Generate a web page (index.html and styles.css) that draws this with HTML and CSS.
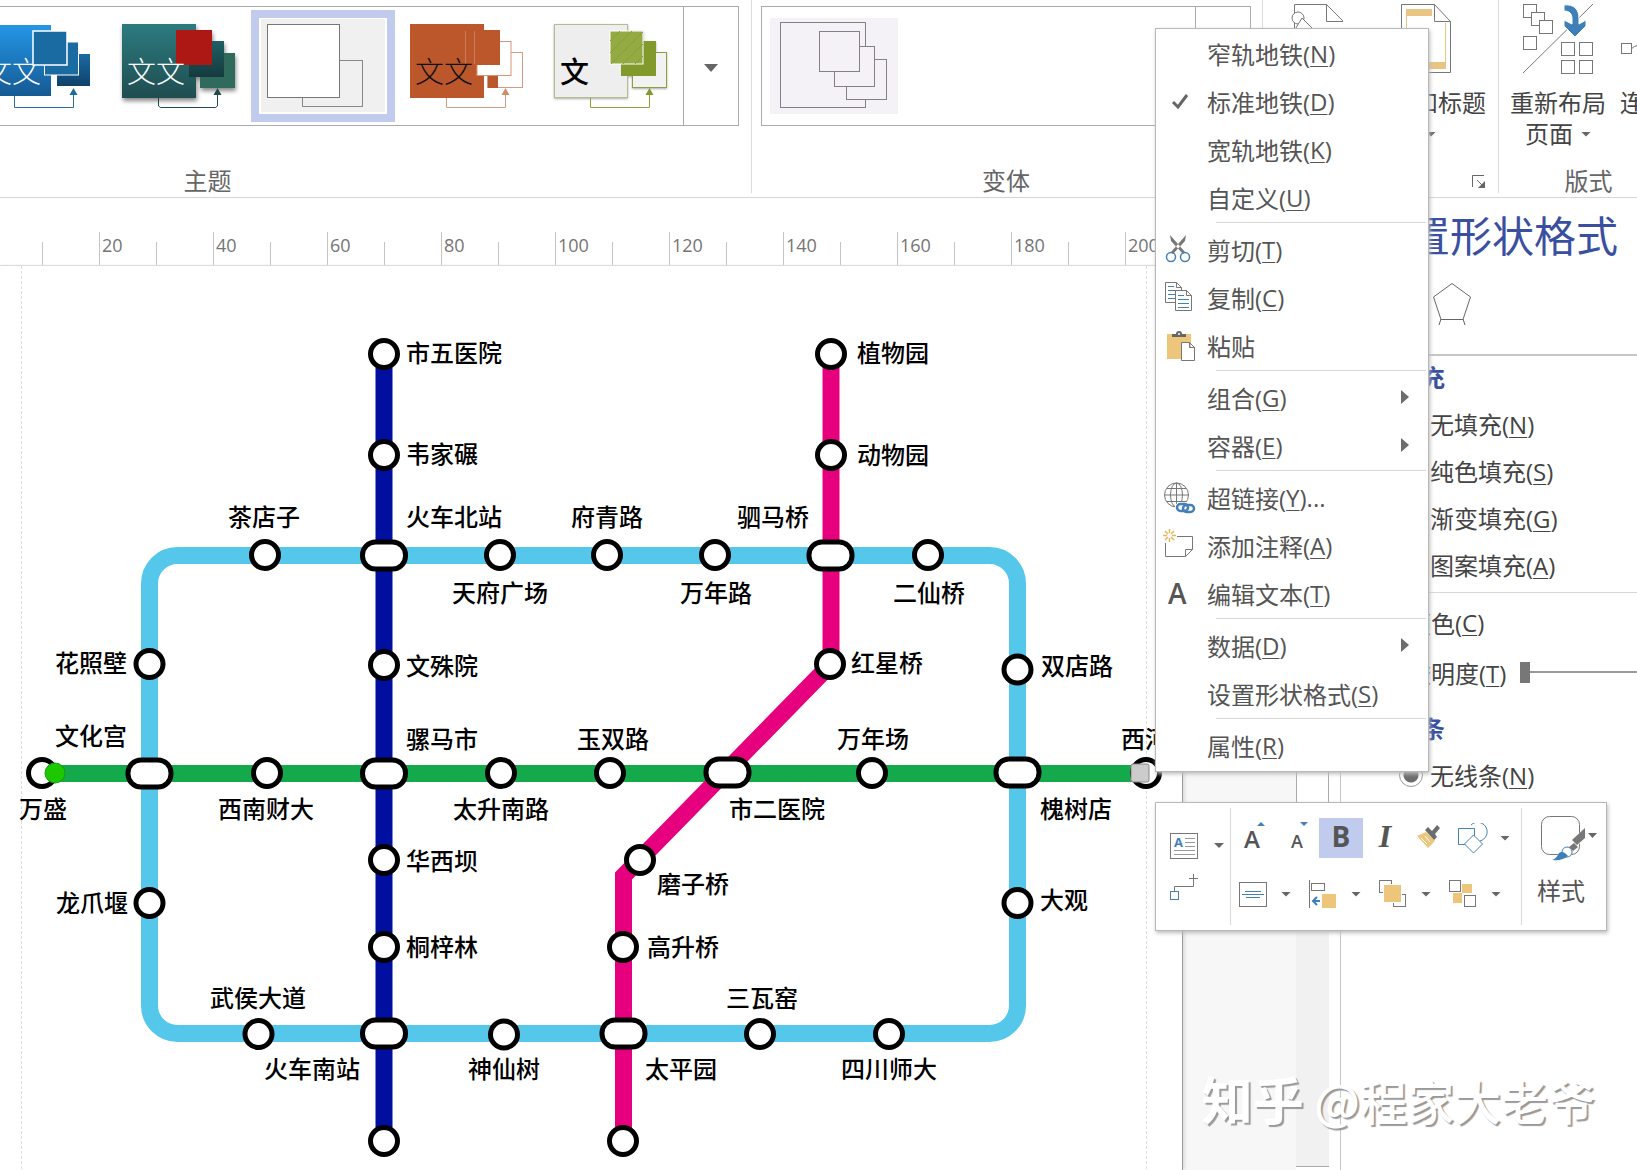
FILE: index.html
```
<!DOCTYPE html>
<html lang="zh-CN">
  <head>
    <meta charset="UTF-8" />
    <meta name="viewport" content="width=device-width, initial-scale=1.0" />
    <title>地铁线路图</title>
    <link rel="stylesheet" href="styles.css">
  </head>
  <body>
    <!-- Ribbon -->
    <header class="ribbon">
      <section class="group group-themes">
        <div class="gallery">
          <div class="gallery-items">
            <button class="theme" aria-label="主题 1">
              <svg width="144" height="118">
                <defs>
                  <linearGradient id="blue" x2="0" y2="1"><stop offset="0" stop-color="#2496e6" /><stop offset="1" stop-color="#155a94" /></linearGradient>
                  <linearGradient id="navy" x2="0" y2="1"><stop offset="0" stop-color="#1b6ba3" /><stop offset="1" stop-color="#0f426b" /></linearGradient>
                </defs>
                <rect x="15" y="18" width="73" height="71" fill="url(#blue)" />
                <text x="20" y="76" class="theme-text" fill="#fff">文文</text>
                <rect x="94" y="47" width="33" height="32" fill="url(#navy)" />
                <rect x="81.500" y="35" width="34" height="33" fill="#1b6ba3" stroke="#fff" />
                <rect x="70" y="24" width="34" height="34" fill="#1b6ba3" stroke="#fff" stroke-width="1.500" />
                <path d="M51.500 89v11.500h59V87" fill="none" stroke="#2a6c9c" />
                <path d="M106.500 88l4-7 4 7z" fill="#1b6ba3" />
              </svg>
            </button>
            <button class="theme" aria-label="主题 2">
              <svg width="144" height="118">
                <defs>
                  <linearGradient id="teal" x2="0" y2="1"><stop offset="0" stop-color="#2c7b80" /><stop offset="1" stop-color="#1f4d50" /></linearGradient>
                  <linearGradient id="deep" x2="0" y2="1"><stop offset="0" stop-color="#1f5f64" /><stop offset="1" stop-color="#153a3e" /></linearGradient>
                </defs>
                <g class="lifted">
                  <rect x="15" y="17" width="74" height="74" fill="url(#teal)" />
                  <rect x="93" y="46" width="35" height="35" fill="#2f6a5d" />
                  <rect x="82" y="34" width="35" height="36" fill="url(#deep)" />
                  <rect x="69" y="23" width="36" height="35" fill="#ad1815" />
                </g>
                <text x="20" y="76" class="theme-text" fill="#fff">文文</text>
                <path d="M51.500 91v8l2 1.500h55l2-1.500V87" fill="none" stroke="#23494c" />
                <path d="M106.500 88l4-7 4 7z" fill="#23494c" />
              </svg>
            </button>
            <button class="theme selected" aria-label="主题 3">
              <svg width="144" height="118">
                <rect x="10" y="12" width="124" height="93" fill="#f0f0f0" />
                <rect x="51.500" y="53.500" width="60" height="46" fill="none" stroke="#888" />
                <rect x="16.500" y="17.500" width="72" height="73" fill="#fff" stroke="#777" />
              </svg>
            </button>
            <button class="theme" aria-label="主题 4">
              <svg width="144" height="118">
                <rect x="15" y="17" width="74" height="74" fill="#bc572c" />
                <rect x="92.500" y="45.500" width="35" height="35" fill="#fff" stroke="#d39c85" />
                <rect x="93" y="68" width="10" height="13" fill="#bc572c" />
                <rect x="82" y="34.500" width="34" height="34" fill="#fff" stroke="#d8957a" />
                <rect x="65" y="23" width="40" height="35" fill="#bc572c" />
                <path d="M70.500 24v33M79.500 24v33" stroke="#cc7a58" />
                <text x="20" y="76" class="theme-text" fill="#111">文文</text>
                <path d="M51.500 91v9.500h59V87" fill="none" stroke="#d39c85" />
                <path d="M106.500 88l4-7 4 7z" fill="#d18a70" />
              </svg>
            </button>
            <button class="theme" aria-label="主题 5">
              <svg width="144" height="118">
                <g class="raised">
                  <rect x="15.500" y="17.500" width="73" height="73" fill="#eee" stroke="#b3bd93" />
                  <rect x="93.500" y="45.500" width="34" height="35" fill="#f2f2f2" stroke="#8da03c" />
                  <rect x="82" y="34" width="35" height="35" fill="#82992c" />
                  <rect x="71" y="24" width="33" height="33" fill="#94aa42" stroke="#fff" />
                </g>
                <path d="M71 34l10-10M71 46l22-22M72 57l32-32M84 57l20-20M96 57l8-8" stroke="#87a035" />
                <text x="21" y="76" class="theme-text theme-text-dark">文</text>
                <path d="M51.500 91v9.500h59V87" fill="none" stroke="#8da03c" />
                <path d="M106.500 88l4-7 4 7z" fill="#82992c" />
              </svg>
            </button>
          </div>
          <button class="gallery-more" aria-label="更多主题"><span class="arrow arrow-big"></span></button>
        </div>
        <div class="group-name">主题</div>
      </section>

      <section class="group group-variants">
        <div class="gallery">
          <div class="gallery-items gallery-start">
            <button class="variant" aria-label="变体 1">
              <svg width="128" height="96" fill="#f4f1f7" stroke="#858087">
                <rect width="128" height="96" stroke="none" />
                <rect x="10.500" y="4.500" width="85" height="85" />
                <rect x="76.500" y="41.500" width="40" height="40" />
                <rect x="64.500" y="28.500" width="40" height="40" />
                <rect x="49.500" y="13.500" width="40" height="40" />
              </svg>
            </button>
          </div>
          <button class="gallery-more" aria-label="更多变体"></button>
        </div>
        <div class="group-name">变体</div>
      </section>

      <section class="group group-background">
        <div class="tools">
          <button class="tool tool-background">
            <svg width="52" height="72" fill="#fff" stroke="#777">
              <path d="M3.500 28V.5h32l17 17v54h-49V28M35.500 .5v17h17" />
              <circle cx="7" cy="14" r="6" /><path d="M0 32l11-18 18 18" />
            </svg>
            <span>背景</span>
            <span class="tool-line"><i class="arrow"></i></span>
          </button>
          <button class="tool tool-titles">
            <svg width="52" height="72" fill="#fff" stroke="#777">
              <path d="M1.500 .5h33l16 17v51h-49zM34.500 .5v17h16" />
              <path d="M6 5h26v7H6zM6 58h40v7H6z" fill="#e8c583" stroke="none" />
              <path d="M6.500 11v50M45.500 19v42" stroke="#e8c583" />
            </svg>
            <span>边框和标题</span>
            <span class="tool-line"><i class="arrow"></i></span>
          </button>
        </div>
        <button class="launcher" aria-label="页面设置">
          <svg width="14" height="14" fill="none" stroke="#666"><path d="M.5 12V.5H12M5 5l7 7" /><path d="M13 6v7H6z" fill="#666" stroke="none" /></svg>
        </button>
      </section>

      <section class="group group-layout">
        <div class="tools">
          <button class="tool tool-relayout">
            <svg width="72" height="72" fill="#fff" stroke="#777">
              <path d="M1 69L71 0" />
              <rect x="1.500" y=".5" width="13" height="13" /><rect x="9.500" y="8.500" width="13" height="13" /><rect x="17.500" y="16.500" width="13" height="13" />
              <rect x="1.500" y="32.500" width="13" height="13" />
              <rect x="39.500" y="38.500" width="13" height="13" /><rect x="57.500" y="38.500" width="13" height="13" />
              <rect x="39.500" y="56.500" width="13" height="13" /><rect x="57.500" y="56.500" width="13" height="13" />
              <path d="M42 1c10-1 15 4 15 14v5l7-4v6L53 33 42 22v-6l8 4v-5c0-6-3-8-8-8z" fill="#3f7fb8" stroke="#fff" />
            </svg>
            <span>重新布局</span>
            <span class="tool-line">页面<i class="arrow"></i></span>
          </button>
          <button class="tool tool-connect">
            <svg width="72" height="72" fill="#fff" stroke="#777"><path d="M11 45q6-6 20-4" /><rect x="1.500" y="39.500" width="10" height="10" /></svg>
            <span>连接线</span>
          </button>
        </div>
        <div class="group-name">版式</div>
      </section>
    </header>

    <div class="workspace">
      <!-- Drawing area -->
      <main class="drawing">
        <div class="ruler">
          <div class="mark"><span></span><i></i></div>
          <div class="mark"><span>20</span><i></i></div>
          <div class="mark"><span>40</span><i></i></div>
          <div class="mark"><span>60</span><i></i></div>
          <div class="mark"><span>80</span><i></i></div>
          <div class="mark"><span>100</span><i></i></div>
          <div class="mark"><span>120</span><i></i></div>
          <div class="mark"><span>140</span><i></i></div>
          <div class="mark"><span>160</span><i></i></div>
          <div class="mark"><span>180</span><i></i></div>
          <div class="mark"><span>200</span><i></i></div>
        </div>
        <div class="sheet">
          <svg class="metro" width="1182" height="904" viewBox="0 266 1182 904">
            <path class="margin-line" d="M21.500 266v904M1146.500 266v904" />
            <rect class="line" x="149.500" y="555.500" width="868" height="478" rx="28" stroke="#54c7ea" />
            <path class="line" d="M42 773.500H1146" stroke="#14a94a" />
            <path class="line" d="M384 354V1141" stroke="#000f9f" />
            <path class="line" d="M831 354V664L623.500 876V1141" stroke="#e6007e" />

            <g class="stops">
              <circle cx="384" cy="354" r="13.500" /><circle cx="384" cy="455" r="13.500" /><circle cx="384" cy="665" r="13.500" />
              <circle cx="384" cy="860" r="13.500" /><circle cx="384" cy="947" r="13.500" /><circle cx="384" cy="1141" r="13.500" />
              <circle cx="831" cy="354" r="13.500" /><circle cx="831" cy="455" r="13.500" /><circle cx="830" cy="664" r="13.500" />
              <circle cx="640" cy="860" r="13.500" /><circle cx="623" cy="947" r="13.500" /><circle cx="623" cy="1141" r="13.500" />
              <circle cx="265" cy="555" r="13.500" /><circle cx="500" cy="555" r="13.500" /><circle cx="607" cy="555" r="13.500" />
              <circle cx="715" cy="555" r="13.500" /><circle cx="928" cy="555" r="13.500" />
              <circle cx="149.500" cy="664" r="13.500" /><circle cx="149.500" cy="903" r="13.500" />
              <circle cx="1017.500" cy="669.500" r="13.500" /><circle cx="1017.500" cy="903" r="13.500" />
              <circle cx="42" cy="773" r="13.500" /><circle cx="267" cy="773" r="13.500" /><circle cx="501" cy="773" r="13.500" />
              <circle cx="610" cy="773" r="13.500" /><circle cx="872" cy="773" r="13.500" /><circle cx="1146" cy="773" r="13.500" />
              <circle cx="258.500" cy="1034" r="13.500" /><circle cx="504" cy="1034.500" r="13.500" /><circle cx="760" cy="1034" r="13.500" /><circle cx="889" cy="1034" r="13.500" />
            </g>
            <g class="stops">
              <rect x="362.500" y="542" width="43" height="27" rx="13" /><rect x="809" y="542" width="43" height="27" rx="13" />
              <rect x="128" y="760" width="43" height="27" rx="13" /><rect x="362.500" y="760" width="43" height="27" rx="13" />
              <rect x="706" y="759" width="43" height="27" rx="13" /><rect x="996" y="759" width="43" height="27" rx="13" />
              <rect x="362.500" y="1020" width="43" height="27" rx="13" /><rect x="602" y="1020" width="43" height="27" rx="13" />
            </g>
            <circle cx="55" cy="773" r="10" fill="#1ec800" stroke="#159a10" />
            <rect x="1131" y="764" width="18" height="18" rx="2" fill="#ccc" stroke="#888" />

            <g class="stop-names">
              <text x="406" y="362">市五医院</text>
              <text x="406" y="463">韦家碾</text>
              <text x="228" y="526">茶店子</text>
              <text x="406" y="526">火车北站</text>
              <text x="452" y="602">天府广场</text>
              <text x="571" y="526">府青路</text>
              <text x="680" y="602">万年路</text>
              <text x="737" y="526">驷马桥</text>
              <text x="893" y="602">二仙桥</text>
              <text x="857" y="362">植物园</text>
              <text x="857" y="464">动物园</text>
              <text x="851" y="672">红星桥</text>
              <text x="1041" y="675">双店路</text>
              <text x="55" y="672">花照壁</text>
              <text x="406" y="675">文殊院</text>
              <text x="55" y="745">文化宫</text>
              <text x="406" y="748">骡马市</text>
              <text x="19" y="818">万盛</text>
              <text x="218" y="818">西南财大</text>
              <text x="453" y="818">太升南路</text>
              <text x="577" y="748">玉双路</text>
              <text x="729" y="818">市二医院</text>
              <text x="837" y="748">万年场</text>
              <text x="1040" y="818">槐树店</text>
              <text x="1121" y="748">西河</text>
              <text x="406" y="870">华西坝</text>
              <text x="56" y="912">龙爪堰</text>
              <text x="406" y="956">桐梓林</text>
              <text x="657" y="893">磨子桥</text>
              <text x="647" y="956">高升桥</text>
              <text x="1040" y="909">大观</text>
              <text x="210" y="1007">武侯大道</text>
              <text x="264" y="1078">火车南站</text>
              <text x="468" y="1078">神仙树</text>
              <text x="645" y="1078">太平园</text>
              <text x="726" y="1007">三瓦窑</text>
              <text x="841" y="1078">四川师大</text>
            </g>
          </svg>
        </div>
      </main>
      <div class="scrollbar">
        <div class="scroll-thumb"></div>
        <div class="scroll-end"></div>
      </div>

      <!-- Format pane -->
      <aside class="pane">
        <h1>设置形状格式</h1>
        <div class="pane-tabs">
          <button aria-label="填充与线条">
            <svg width="40" height="44" fill="none" stroke="#666"><path d="M20 .500L38.500 14 31 36.500H9L1.500 14zM9 36l-2 6M31 36l2 6" /></svg>
          </button>
        </div>
        <h2>填充</h2>
        <label class="option"><input type="radio" name="fill" /><span>无填充(<u>N</u>)</span></label>
        <label class="option"><input type="radio" name="fill" /><span>纯色填充(<u>S</u>)</span></label>
        <label class="option"><input type="radio" name="fill" /><span>渐变填充(<u>G</u>)</span></label>
        <label class="option"><input type="radio" name="fill" /><span>图案填充(<u>A</u>)</span></label>
        <div class="pane-part">
          <div class="pane-row">颜色(<u>C</u>)</div>
          <div class="pane-row"><label for="opacity">透明度(<u>T</u>)</label><input type="range" id="opacity" value="0" /></div>
        </div>
        <h2>线条</h2>
        <label class="option"><input type="radio" name="stroke" checked /><span>无线条(<u>N</u>)</span></label>
      </aside>
    </div>

    <!-- Context menu -->
    <div class="menu" role="menu">
      <button><svg></svg>窄轨地铁(<u>N</u>)</button>
      <button><svg><path d="M9 17l5 5 9-12" fill="none" stroke="#666" stroke-width="3" /></svg>标准地铁(<u>D</u>)</button>
      <button><svg></svg>宽轨地铁(<u>K</u>)</button>
      <button><svg></svg>自定义(<u>U</u>)</button>
      <hr />
      <button>
        <svg fill="none"><path d="M6 2l1 6 12 13 2-2zM22 2l-1 6L9 21l-2-2z" fill="#777" /><circle cx="7" cy="24" r="4.500" stroke="#4580b5" stroke-width="1.500" /><circle cx="21" cy="24" r="4.500" stroke="#4580b5" stroke-width="1.500" /></svg>剪切(<u>T</u>)
      </button>
      <button>
        <svg fill="#fff" stroke="#777"><path d="M1.500 1.500h11l5 5v15h-16zM12.500 1.500v5h5" /><path d="M4 5.500h6M4 9.500h10M4 13.500h7M4 17.500h7" stroke="#4580b5" /><path d="M11.500 9.500h11l5 5v15h-16zM22.500 9.500v5h5" /><path d="M14 14.500h6M14 18.500h11M14 22.500h11M14 26.500h11" stroke="#4580b5" /></svg>复制(<u>C</u>)
      </button>
      <button>
        <svg><path d="M3 5h24v25H3z" fill="#edc57b" /><path d="M8 8V5h4a3 3 0 0 1 6 0h4v3z" fill="#666" /><circle cx="15" cy="5" r="1" fill="#fff" /><path d="M17.500 13.500h8l5 5v13h-13zM25.500 13.500v5h5" fill="#fff" stroke="#777" /></svg>粘贴
      </button>
      <hr />
      <button><svg></svg>组合(<u>G</u>)<i class="submenu"></i></button>
      <button><svg></svg>容器(<u>E</u>)<i class="submenu"></i></button>
      <hr />
      <button>
        <svg fill="none" stroke="#777"><circle cx="12.500" cy="14" r="12" /><ellipse cx="12.500" cy="14" rx="6" ry="12" /><path d="M12.500 2v24M1 14h24M3 7.500h19M3 20.500h19" /><path d="M11 32v-8l4-3h17v11z" fill="#fff" stroke="none" /><g stroke="#4580b5" stroke-width="2.500"><rect x="13" y="23" width="11" height="7" rx="3.500" /><rect x="19" y="24" width="11" height="7" rx="3.500" /></g></svg>超链接(<u>Y</u>)...
      </button>
      <button>
        <svg fill="none" stroke="#777"><path d="M13 7.500h15.500v13l-7 7H1.500V14M28.500 20.500h-7v7" /><path d="M5.500 0v4M5.500 9v4M-1 6.500h4M8 6.500h4M1 2l3 3M10 2L7 5M1 11l3-3M10 11L7 8" stroke="#e5b55c" stroke-width="1.500" /></svg>添加注释(<u>A</u>)
      </button>
      <button><svg><text x="4" y="27" class="menu-letter">A</text></svg>编辑文本(<u>T</u>)</button>
      <hr />
      <button><svg></svg>数据(<u>D</u>)<i class="submenu"></i></button>
      <button><svg></svg>设置形状格式(<u>S</u>)</button>
      <hr />
      <button><svg></svg>属性(<u>R</u>)</button>
    </div>

    <!-- Mini toolbar -->
    <div class="mini-toolbar">
      <div class="mini-left">
        <button aria-label="文本框">
          <svg width="28" height="26" fill="none" stroke="#777"><rect x=".5" y=".5" width="27" height="25" /><path d="M15 5.500h10M15 9.500h10M15 13.500h10M4 17.500h21M4 21.500h21" stroke="#999" /><text x="4" y="14" class="box-letter">A</text></svg>
          <i class="arrow"></i>
        </button>
        <button aria-label="连接线">
          <svg width="28" height="26" fill="none" stroke="#777"><path d="M4.500 17v-4.500h19V0M19 4.500h9" /><rect x=".5" y="17.500" width="8" height="8" stroke="#4580b5" /></svg>
        </button>
      </div>
      <div class="mini-main">
        <div class="mini-row">
          <button class="letter" aria-label="增大字号"><svg width="32" height="32"><text x="7" y="28" class="grow-letter">A</text><path d="M20 6l4-4 4 4z" fill="#4580b5" /></svg></button>
          <button class="letter" aria-label="减小字号"><svg width="32" height="32"><text x="10" y="28" class="shrink-letter">A</text><path d="M19 2h8l-4 4z" fill="#4580b5" /></svg></button>
          <button class="letter bold">B</button>
          <button class="letter italic">I</button>
          <button class="letter" aria-label="格式刷">
            <svg width="28" height="28"><path d="M2 14l9-4 9 9-7 7z" fill="#edc57b" /><path d="M6 16l6 6M10 14l5 6" stroke="#fff" /><path d="M10 8l3-3 4 4 5-6 3 3-5 6 2 3-3 3z" fill="#6d6d6d" /></svg>
          </button>
          <button class="shapes" aria-label="更改形状">
            <svg width="30" height="30" fill="none" stroke="#4580b5"><path d="M13 2a9.500 9.500 0 1 1 9 16" /><path d="M.5 5.500h16v16H.5z" fill="#fff" /><path d="M15.500 12l9 9-9 9-9-9z" fill="#fff" /></svg>
            <i class="arrow"></i>
          </button>
        </div>
        <div class="mini-row">
          <button class="split" aria-label="对齐文本"><svg width="28" height="28" fill="none" stroke="#777"><rect x=".5" y="2.500" width="27" height="24" /><path d="M6 11.500h16M3 14.500h22M7 17.500h14" stroke="#4580b5" /></svg><i class="arrow"></i></button>
          <button class="split" aria-label="对齐形状"><svg width="28" height="28" fill="none" stroke="#777"><path d="M.5 0v28" /><rect x="2.500" y="3.500" width="13" height="7" /><rect x="13" y="14" width="14" height="14" fill="#edc57b" stroke="none" /><path d="M4 21h7M8 17l-4 4 4 4" stroke="#3f7fb8" stroke-width="2" /></svg><i class="arrow"></i></button>
          <button class="split" aria-label="置于顶层"><svg width="28" height="28" fill="none" stroke="#777"><rect x=".5" y=".5" width="12" height="12" /><rect x="14.500" y="14.500" width="12" height="12" /><rect x="4.500" y="4.500" width="18" height="18" fill="#edc57b" stroke="#fff" /></svg><i class="arrow"></i></button>
          <button class="split" aria-label="组合"><svg width="28" height="28" fill="#fff" stroke="#777"><path d="M13 4h10v9H13zM4 13h9v10H4z" fill="#edc57b" stroke="none" /><rect x=".5" y=".5" width="11" height="11" /><rect x="15.500" y="15.500" width="11" height="11" /></svg><i class="arrow"></i></button>
        </div>
      </div>
      <button class="mini-style">
        <svg width="58" height="46" fill="none"><rect x=".5" y=".5" width="38" height="38" rx="8" stroke="#777" /><path d="M10 45L28 28l17-18v10L30 38q-5 7-20 7z" fill="#fff" /><path d="M44 12v10l-8 7-5-5z" fill="#777" /><path d="M33 27l4 4-5 4-4-4z" fill="#777" /><circle cx="26" cy="36" r="5" fill="#fff" stroke="#4580b5" /><path d="M11 44q4-1 7-7 4-3 9 3-5 5-16 4z" fill="#3f7fb8" /><path d="M47 17h9l-4.500 5z" fill="#666" /></svg>
        <span>样式</span>
      </button>
    </div>

    <div class="watermark"><b>知乎</b> @程家大老爷</div>
  </body>
</html>
```
FILE: styles.css
```
* {
  box-sizing: border-box;
}
body {
  margin: 0;
  height: 100vh;
  display: flex;
  flex-direction: column;
  overflow: hidden;
  position: relative;
  background-color: #fff;
  color: #444;
  font-family: "Open Sans", "Noto Sans CJK SC", sans-serif;
  font-size: 24px;
}
button {
  border: none;
  padding: 0;
  background: none;
  color: inherit;
  font: inherit;
  cursor: pointer;
}
svg {
  display: block;
  flex-shrink: 0;
}
u {
  text-decoration-thickness: 1px;
  text-underline-offset: 3px;
}
.arrow {
  width: 10px;
  height: 5px;
  flex-shrink: 0;
  background-color: #666;
  clip-path: polygon(0 0, 100% 0, 50% 100%);
}
.arrow-big {
  width: 14px;
  height: 8px;
  margin-top: 4px;
}

/* Ribbon */
.ribbon {
  display: flex;
  height: 198px;
  flex-shrink: 0;
  overflow: hidden;
  border-bottom: 1px solid #d5d5d5;
}
.group {
  display: flex;
  flex-direction: column;
  flex-shrink: 0;
  position: relative;
  height: 193px;
  border-right: 1px solid #dcdcdc;
}
.group-themes {
  width: 1088px;
  margin-left: -336px;
  padding: 6px 12px 0 0;
}
.group-variants {
  width: 511px;
  padding: 6px 11px 0 9px;
}
.group-background {
  width: 236px;
}
.group-layout {
  width: 180px;
}
.gallery {
  display: flex;
  height: 120px;
  border: 1px solid #ababab;
}
.group-themes .gallery {
  margin-left: 12px;
}
.gallery-items {
  display: flex;
  flex: 1;
  justify-content: flex-end;
  overflow: hidden;
}
.gallery-start {
  justify-content: flex-start;
  padding: 11px 8px;
}
.gallery-more {
  display: flex;
  align-items: center;
  justify-content: center;
  width: 55px;
  border-left: 1px solid #ababab;
}
.theme {
  width: 144px;
  height: 118px;
  flex-shrink: 0;
}
.theme.selected {
  height: 112px;
  margin-top: 3px;
  box-shadow: inset 0 0 0 8px #c0cbee;
}
.theme.selected svg {
  margin-top: -3px;
}
.theme-text {
  font-family: "Noto Sans CJK SC", sans-serif;
  font-size: 29px;
  font-weight: 300;
}
.theme-text-dark {
  font-weight: 500;
}
.lifted {
  filter: drop-shadow(1px 3px 2px #888);
}
.raised {
  filter: drop-shadow(0 1px 1px #aaa);
}
.group-name {
  margin-top: auto;
  line-height: 24px;
  text-align: center;
  color: #666;
}
.group-themes .group-name {
  padding-left: 12px;
}
.tools {
  display: flex;
  gap: 6px;
  padding: 4px 12px 0;
}
.group-layout .tools {
  gap: 14px;
  padding: 4px 0 0 11px;
}
.tool {
  display: flex;
  flex-direction: column;
  align-items: center;
  flex-shrink: 0;
  line-height: 30px;
  white-space: nowrap;
}
.tool svg {
  margin-bottom: 12px;
}
.tool-background {
  width: 84px;
}
.tool-titles {
  width: 122px;
}
.tool-titles .tool-line {
  padding-left: 10px;
}
.tool-relayout {
  width: 96px;
}
.tool-connect {
  align-items: flex-start;
}
.tool-line {
  display: flex;
  align-items: center;
  gap: 8px;
  height: 32px;
}
.launcher {
  position: absolute;
  right: 12px;
  bottom: 4px;
}

/* Workspace */
.workspace {
  display: flex;
  flex: 1;
  min-height: 0;
}
.drawing {
  display: flex;
  flex-direction: column;
  flex: 1;
  min-width: 0;
  overflow: hidden;
  background-color: #f7f7f7;
}
.ruler {
  display: flex;
  height: 68px;
  flex-shrink: 0;
  align-items: flex-end;
  margin-left: -15px;
  border-bottom: 1px solid #dcdcdc;
  background-color: #fff;
  color: #757575;
  font-size: 18px;
}
.mark {
  display: flex;
  align-items: flex-end;
  width: 114px;
  flex-shrink: 0;
}
.mark span,
.mark i {
  width: 57px;
  border-left: 1px solid #c4c4c4;
}
.mark span {
  height: 33px;
  padding-left: 2px;
  line-height: 26px;
}
.mark i {
  height: 23px;
}
.sheet {
  flex: 1;
  width: 1183px;
  min-height: 0;
  overflow: hidden;
  border-right: 1px solid #999;
  background-color: #fff;
  box-shadow: 2px 0 3px #ddd;
}
.margin-line {
  stroke: #dcdcdc;
  stroke-dasharray: 3 2;
}
.line {
  fill: none;
  stroke-width: 17px;
}
.stops {
  fill: #fff;
  stroke: #000;
  stroke-width: 5px;
}
.stop-names {
  font-family: "Noto Sans CJK SC", sans-serif;
  font-size: 24px;
  font-weight: 500;
  fill: #000;
}
.scrollbar {
  display: flex;
  flex-direction: column;
  width: 33px;
  margin-right: 11px;
  background-color: #f1f1f1;
}
.scroll-thumb {
  flex: 2;
  border: 1px solid #ababab;
  background-color: #fff;
}
.scroll-end {
  flex: 1;
  border-bottom: 3px solid #fff;
  box-shadow: inset 0 -1px #ababab;
}

/* Format pane */
.pane {
  width: 297px;
  border-left: 1px solid #c8c8c8;
  overflow: hidden;
}
.pane h1 {
  margin: 0 19px 0 0;
  display: flex;
  justify-content: flex-end;
  line-height: 76px;
  font-size: 42px;
  font-weight: 400;
  white-space: nowrap;
  color: #3a4f9f;
}
.pane h2 {
  margin: 0;
  padding-left: 56px;
  line-height: 44px;
  font-size: 24px;
  font-weight: 700;
  color: #3a4f9f;
}
.pane-tabs {
  height: 82px;
  padding: 9px 0 0 91px;
  border-bottom: 2px solid #c6c6c6;
}
.option {
  display: flex;
  align-items: center;
  gap: 7px;
  height: 47px;
  padding-left: 58px;
}
.option input {
  appearance: none;
  width: 24px;
  height: 24px;
  margin: 0;
  border: 1px solid #999;
  border-radius: 50%;
}
.option input:checked {
  background: radial-gradient(#6d6d6d 7px, #fff 8px);
}
.pane-part {
  margin: 4px 0 10px;
  padding: 4px 0 0 66px;
  border-top: 1px solid #d8d8d8;
}
.pane-row {
  display: flex;
  align-items: center;
  height: 50px;
  white-space: nowrap;
}
.pane-row input {
  appearance: none;
  flex: 1;
  min-width: 0;
  height: 21px;
  margin: 0 0 0 14px;
  background: linear-gradient(#999, #999) center / 100% 2px no-repeat;
}
.pane-row input::-webkit-slider-thumb {
  appearance: none;
  width: 10px;
  height: 21px;
  background-color: #777;
}

/* Context menu */
.menu {
  position: absolute;
  top: 28px;
  left: 1155px;
  width: 274px;
  padding: 1px 0;
  border: 1px solid #b8b8b8;
  background-color: #fff;
  box-shadow: 1px 2px 4px #bbb;
  color: #555;
}
.menu button {
  display: flex;
  align-items: center;
  width: 100%;
  height: 48px;
  padding: 0 0 2px 8px;
  white-space: nowrap;
}
.menu svg {
  width: 32px;
  height: 32px;
  margin-right: 11px;
  overflow: visible;
}
.menu hr {
  height: 4px;
  margin: 0 2px 0 60px;
  border: none;
  border-top: 1px solid #d8d8d8;
}
.menu-letter {
  font-size: 28px;
  font-weight: 600;
  fill: #555;
}
.submenu {
  width: 8px;
  height: 14px;
  margin: 0 19px 0 auto;
  background-color: #6d6d6d;
  clip-path: polygon(0 0, 100% 50%, 0 100%);
}

/* Mini toolbar */
.mini-toolbar {
  position: absolute;
  top: 802px;
  left: 1155px;
  display: flex;
  height: 129px;
  padding: 5px 0;
  border: 1px solid #b8b8b8;
  background-color: #fff;
  box-shadow: 1px 2px 4px #bbb;
  color: #555;
}
.mini-left {
  width: 75px;
  padding: 17px 0 0 14px;
  border-right: 1px solid #d8d8d8;
}
.mini-left button {
  display: flex;
  align-items: center;
  gap: 16px;
  height: 41px;
}
.mini-main {
  display: flex;
  flex-direction: column;
  gap: 16px;
  width: 291px;
  padding-top: 10px;
  border-right: 1px solid #d8d8d8;
}
.mini-row {
  display: flex;
  height: 40px;
}
.letter {
  display: flex;
  align-items: center;
  justify-content: center;
  width: 44px;
  padding-bottom: 4px;
}
.bold {
  background-color: #c0cbee;
  font-size: 28px;
  font-weight: 700;
}
.italic {
  font-family: "Liberation Serif", serif;
  font-size: 32px;
  font-weight: 700;
  font-style: italic;
}
.shapes {
  display: flex;
  align-items: center;
  gap: 12px;
  padding-left: 7px;
}
.split {
  display: flex;
  align-items: center;
  gap: 14px;
  width: 70px;
  padding-left: 8px;
}
.box-letter {
  font-size: 13px;
  font-weight: 700;
  fill: #4580b5;
  stroke: none;
}
.grow-letter,
.shrink-letter {
  font-size: 24px;
  font-weight: 600;
  fill: #555;
}
.shrink-letter {
  font-size: 18px;
}
.mini-style {
  display: flex;
  flex-direction: column;
  align-items: flex-start;
  width: 84px;
  padding: 8px 0 0 19px;
  line-height: 30px;
}
.mini-style span {
  margin: 14px 0 0 -4px;
}

.watermark {
  position: absolute;
  right: 42px;
  bottom: 36px;
  line-height: 68px;
  font-family: "Noto Sans CJK SC", sans-serif;
  font-size: 47px;
  font-weight: 500;
  color: #fff;
  text-shadow: 2px 2px 1px #999;
}
.watermark b {
  font-size: 51px;
}
```
